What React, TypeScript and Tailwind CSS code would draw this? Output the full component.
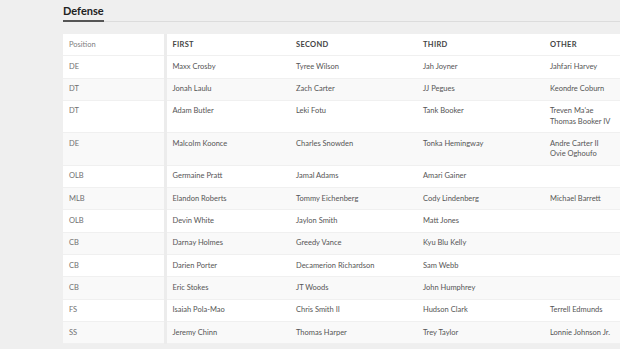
const rows: [string, string, string, string, string[]][] = [
  ["DE", "Maxx Crosby", "Tyree Wilson", "Jah Joyner", ["Jahfari Harvey"]],
  ["DT", "Jonah Laulu", "Zach Carter", "JJ Pegues", ["Keondre Coburn"]],
  ["DT", "Adam Butler", "Leki Fotu", "Tank Booker", ["Treven Ma'ae", "Thomas Booker IV"]],
  ["DE", "Malcolm Koonce", "Charles Snowden", "Tonka Hemingway", ["Andre Carter II", "Ovie Oghoufo"]],
  ["OLB", "Germaine Pratt", "Jamal Adams", "Amari Gainer", []],
  ["MLB", "Elandon Roberts", "Tommy Eichenberg", "Cody Lindenberg", ["Michael Barrett"]],
  ["OLB", "Devin White", "Jaylon Smith", "Matt Jones", []],
  ["CB", "Darnay Holmes", "Greedy Vance", "Kyu Blu Kelly", []],
  ["CB", "Darien Porter", "Decamerion Richardson", "Sam Webb", []],
  ["CB", "Eric Stokes", "JT Woods", "John Humphrey", []],
  ["FS", "Isaiah Pola-Mao", "Chris Smith II", "Hudson Clark", ["Terrell Edmunds"]],
  ["SS", "Jeremy Chinn", "Thomas Harper", "Trey Taylor", ["Lonnie Johnson Jr."]],
];

const cell = "border-b border-[#f0f0f0] px-[6px] py-[5.55px] align-top";

export default function App() {
  return (
    <div
      className="h-[349px] w-[620px] overflow-hidden bg-[#efefef] pl-[63px] pt-[4px] text-[#555]"
      style={{ fontFamily: "Lato, 'Open Sans', sans-serif" }}
    >
      <div className="flex border-b border-[#dcdcdc]">
        <h2 className="-mb-px border-b-2 border-[#555] pb-[2px] text-[11px] leading-[14px] font-bold text-[#222]">
          Defense
        </h2>
      </div>

      <table className="mt-[12px] w-[610px] table-fixed border-collapse text-[7.5px] leading-[10.2px]">
        <colgroup>
          <col className="w-[102px]" />
          <col className="w-[125px]" />
          <col className="w-[127px]" />
          <col className="w-[127px]" />
          <col className="w-[129px]" />
        </colgroup>
        <thead>
          <tr className="bg-white">
            <th className={`${cell} border-r-[3px] border-r-[#ececec] text-left font-normal text-[#808080]`}>
              Position
            </th>
            {["FIRST", "SECOND", "THIRD", "OTHER"].map((h) => (
              <th key={h} className={`${cell} text-left font-bold tracking-[0.04em] text-[#444]`}>
                {h}
              </th>
            ))}
          </tr>
        </thead>
        <tbody>
          {rows.map(([pos, first, second, third, other], i) => (
            <tr key={i} className={i % 2 === 1 ? "bg-[#f9f9f9]" : "bg-white"}>
              <td className={`${cell} border-r-[3px] border-r-[#ececec] text-[#707070]`}>{pos}</td>
              <td className={cell}>{first}</td>
              <td className={cell}>{second}</td>
              <td className={cell}>{third}</td>
              <td className={cell}>
                {other.map((o) => (
                  <div key={o}>{o}</div>
                ))}
              </td>
            </tr>
          ))}
        </tbody>
      </table>
    </div>
  );
}
